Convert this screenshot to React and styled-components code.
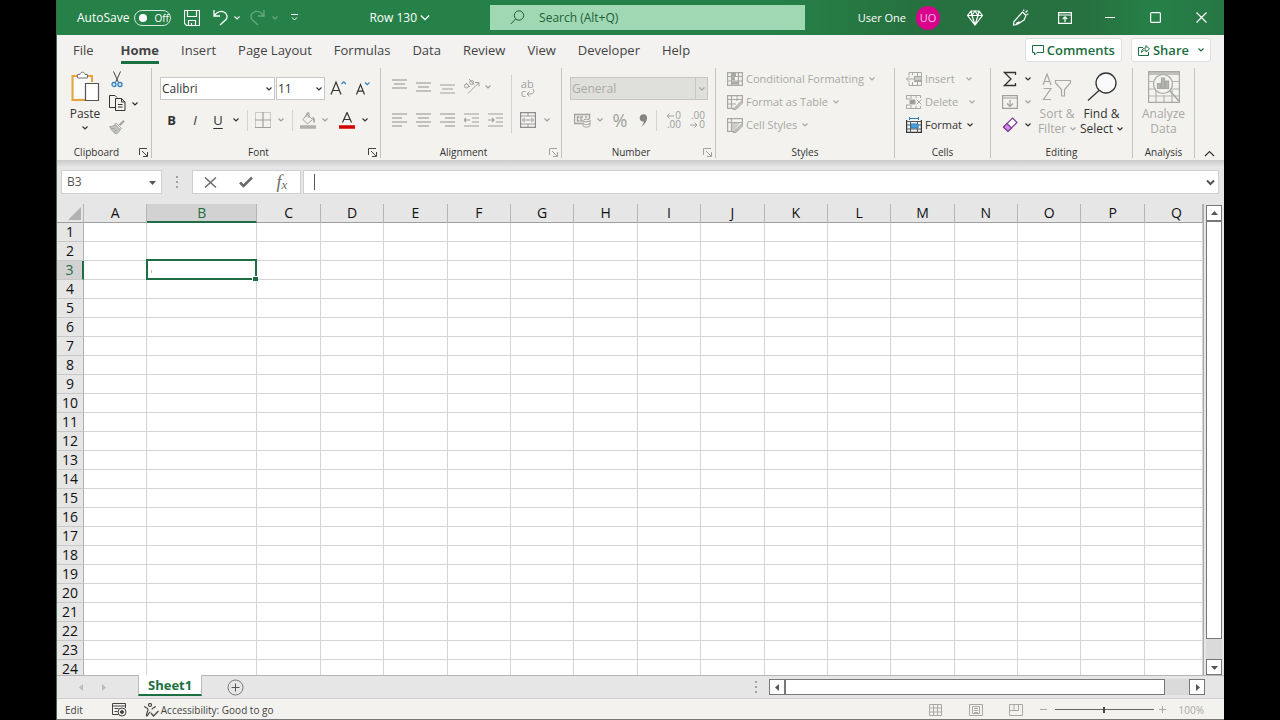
import React, { useState } from 'react'
import styled, { createGlobalStyle, css } from 'styled-components'

const GlobalStyle = createGlobalStyle`
  * {
    box-sizing: border-box;
  }
  body {
    margin: 0;
    background: #000;
    font-family: 'Open Sans', 'Noto Sans', sans-serif;
    font-size: 12px;
    line-height: 16px;
    color: #333;
  }
  button, input, select {
    font: inherit;
    color: inherit;
    margin: 0;
  }
`

const Window = styled.div`
  display: flex;
  flex-direction: column;
  height: 100vh;
  margin: 0 56px;
  border-left: 1px solid #3f6b52;
  border-bottom: 1px solid #777;
  background: #e6e6e6;
  overflow: hidden;
`

const PlainButton = styled.button`
  display: inline-flex;
  align-items: center;
  justify-content: center;
  flex: none;
  padding: 0;
  border: 0;
  background: none;
  white-space: nowrap;
`

const Svg = styled.svg`
  display: block;
  flex: none;
  fill: none;
  stroke: currentColor;
`

const Icon = ({ w = 16, h = w, sw = 1, children }) => (
  <Svg width={w} height={h} viewBox={`0 0 ${w} ${h}`} strokeWidth={sw} aria-hidden="true">
    {children}
  </Svg>
)

const Chevron = ({ size = 6 }) => (
  <Svg width={size} height={size} viewBox="0 0 6 6" strokeWidth={size > 8 ? 0.8 : 1.2} aria-hidden="true">
    <path d="M.5 1.500 3 4l2.500-2.500" />
  </Svg>
)

/* ---------- title bar ---------- */

const TitleBar = styled.header`
  display: flex;
  align-items: center;
  flex: none;
  height: 35px;
  padding-left: 20px;
  color: #fff;
  background: linear-gradient(90deg, #258147 0 62%, #27703f 74% 88%, #258147 94%, #277644);
`

const AutoSave = styled.label`
  display: flex;
  align-items: center;
  gap: 5px;
`

const Toggle = styled.button`
  display: flex;
  align-items: center;
  gap: 7px;
  width: 37px;
  height: 16px;
  padding: 0 4px;
  border: 1px solid #d5eadc;
  border-radius: 8px;
  background: none;
  font-size: 10px;
  line-height: 14px;

  &::before {
    content: '';
    width: 8px;
    height: 8px;
    flex: none;
    border-radius: 50%;
    background: #fff;
  }
`

const TitleButton = styled(PlainButton)`
  width: ${p => p.$w}px;
  height: 35px;
  opacity: ${p => (p.disabled ? 0.3 : 1)};
`

const FileName = styled(PlainButton)`
  gap: 3px;
  height: 34px;
  margin-left: 63px;
`

const SearchBox = styled.label`
  display: flex;
  align-items: center;
  flex: 0 1 315px;
  gap: 14px;
  height: 25px;
  margin-left: 60px;
  padding-left: 20px;
  background: #a0d8b3;
  color: #1e6038;

  input {
    flex: 1;
    min-width: 0;
    padding: 0;
    border: 0;
    outline: 0;
    background: none;
  }
  input::placeholder {
    color: #1e6038;
    opacity: 1;
  }
`

const Account = styled(PlainButton)`
  gap: 10px;
  margin-left: auto;
  padding-right: 13px;
  font-size: 11px;
`

const Avatar = styled.span`
  width: 24px;
  height: 24px;
  border-radius: 50%;
  background: #d8008c;
  line-height: 24px;
  text-align: center;
  color: #f7c4e4;
`

/* ---------- tabs ---------- */

const TabBar = styled.nav`
  display: flex;
  align-items: center;
  flex: none;
  height: 31px;
  padding: 0 13px 0 16px;
  background: #f3f2f1;
`

const Tab = styled.a`
  display: flex;
  align-items: center;
  height: 26px;
  margin-right: 22px;
  border-top: 2px solid transparent;
  border-bottom: 3px solid ${p => (p.$active ? '#1b7041' : 'transparent')};
  font-size: 13px;
  font-weight: ${p => (p.$active ? 700 : 400)};
  color: #444;
  text-decoration: none;
  white-space: nowrap;

  &:first-child {
    margin-right: 27px;
  }
`

const ActionButton = styled(PlainButton)`
  gap: 3px;
  height: 24px;
  padding: 0 6px;
  border: 1px solid #e1dfdd;
  border-radius: 3px;
  background: #fff;
  color: #1b6e40;
  font-size: 13px;
  font-weight: 600;

  > span {
    margin-left: 6px;
  }
`

const Actions = styled.div`
  display: flex;
  gap: 9px;
  margin: -1px 0 0 auto;
`

/* ---------- ribbon ---------- */

const Ribbon = styled.section`
  display: flex;
  flex: none;
  height: 94px;
  padding-top: 2px;
  background: #f3f2ee;
`

const Group = styled.div`
  display: flex;
  flex-direction: column;
  flex: 0 1 ${p => p.$w}px;
  height: 90px;
  border-right: 1px solid #c3c3c0;
`

const GroupBody = styled.div`
  display: flex;
  flex: 1;
  align-items: flex-start;
  justify-content: ${p => p.$justify || 'flex-start'};
  padding-left: ${p => p.$pad || 0}px;
`

const GroupFooter = styled.div`
  display: flex;
  align-items: center;
  height: 12px;
  font-size: 10px;
  line-height: 12px;

  span {
    flex: 1;
    text-align: center;
  }
`

const Launcher = styled(PlainButton)`
  width: 15px;
  height: 12px;
  color: ${p => (p.disabled ? '#a3a3a3' : '#444')};
`

const Stack = styled.div`
  display: flex;
  flex-direction: column;
  flex: none;
`

const Row = styled.div`
  display: flex;
  align-items: center;
  height: ${p => p.$h || 32}px;
  padding-left: ${p => p.$pad || 0}px;
`

const Tool = styled(PlainButton)`
  width: ${p => p.$w || 24}px;
  height: 22px;
  color: ${p => (p.disabled ? '#a0a09d' : '#333')};
  font-size: ${p => p.$size || 13}px;
  font-weight: ${p => (p.$bold ? 700 : 400)};
  font-style: ${p => (p.$italic ? 'italic' : 'normal')};
  text-decoration: ${p => (p.$underline ? 'underline' : 'none')};
  text-underline-offset: 3px;
`

const Divider = styled.span`
  flex: none;
  width: 1px;
  height: ${p => p.$h || 21}px;
  margin: ${p => p.$top || 0}px ${p => p.$gap || 4}px 0;
  background: #d2d2cf;
`

const BigTool = styled(PlainButton)`
  flex-direction: column;
  justify-content: flex-start;
  width: ${p => p.$w}px;
  line-height: 15px;
  color: ${p => (p.disabled ? '#a8a8a5' : '#333')};
`

const BigIcon = styled.span`
  display: flex;
  align-items: center;
  height: 38px;
`

const WithChevron = styled.span`
  display: flex;
  align-items: center;
  gap: 4px;
`

const RowTool = styled(PlainButton)`
  gap: 3px;
  height: 22px;
  font-size: 11px;
  color: ${p => (p.disabled ? '#a8a8a5' : '#333')};

  svg + span {
    margin-right: ${p => p.$gap || 2}px;
  }
`

const Combo = styled.div`
  position: relative;
  width: ${p => p.$w}px;
  height: 23px;
  margin-right: 1px;
  color: ${p => (p.$off ? '#aaaaa6' : '#333')};

  select {
    appearance: none;
    width: 100%;
    height: 100%;
    padding: 0 16px 0 1px;
    border: 1px solid ${p => (p.$off ? '#c6c6c3' : '#c8c8c6')};
    border-radius: 0;
    background: ${p => (p.$off ? '#dfdfdb' : '#fff')};
    color: inherit;
    opacity: 1;
  }
  > svg {
    position: absolute;
    top: 9px;
    right: 3px;
    pointer-events: none;
  }
  ${p => p.$off && css`
    &::after {
      content: '';
      position: absolute;
      top: 0;
      right: 12px;
      bottom: 0;
      border-left: 1px solid #c6c6c3;
    }
  `}
`

const Collapse = styled(PlainButton)`
  align-self: flex-end;
  width: 29px;
  height: 14px;
`

/* ---------- formula bar ---------- */

const FormulaBar = styled.div`
  display: flex;
  align-items: flex-start;
  flex: none;
  height: 44px;
  padding: 10px 5px 0 4px;
  background: linear-gradient(#cbcbcb, #e6e6e6 7px);
`

const FieldBox = styled.div`
  display: flex;
  align-items: center;
  flex: ${p => (p.$grow ? '1' : 'none')};
  width: ${p => (p.$w ? p.$w + 'px' : 'auto')};
  height: 24px;
  padding: 0 5px;
  border: 1px solid #cfcfcf;
  background: #fff;
  color: #555;

  input {
    flex: 1;
    min-width: 0;
    padding: 0;
    border: 0;
    outline: 0;
  }
`

const FormulaField = styled(FieldBox)`
  margin-left: 2px;
  padding-right: 3px;
`

const FormulaTool = styled(Tool)`
  color: #6a6a6a;
`

const FxTool = styled(FormulaTool)`
  font-family: 'Liberation Serif', serif;
  font-size: 18px;
  font-style: italic;

  small {
    align-self: flex-end;
    font-size: 13px;
  }
`

const Caret = styled.span`
  width: 1px;
  height: 16px;
  margin: 0 4px 0 5px;
  background: #555;
`

const Dots = styled.span`
  display: flex;
  align-items: center;
  justify-content: center;
  width: ${p => p.$w}px;
  height: 24px;
  color: #a0a0a0;
`

/* ---------- grid ---------- */

const SheetArea = styled.main`
  display: flex;
  flex: 1;
  min-height: 0;
`

const GridClip = styled.div`
  flex: 1;
  min-width: 0;
  overflow: hidden;
  border-right: 1px solid #ababab;
`

const Grid = styled.table`
  width: 100%;
  table-layout: fixed;
  border-collapse: separate;
  border-spacing: 0;
  background: #fff;

  th, td {
    height: 19px;
    padding: 0;
    font-size: 14px;
    font-weight: 400;
    line-height: 18px;
    color: #111;
  }
  td {
    border-right: 1px solid #d4d4d4;
    border-bottom: 1px solid #d4d4d4;
  }
  thead th:last-child {
    padding-left: 6px;
  }
`

const RowHeadCol = styled.col`
  width: 27px;
`
const WideCol = styled.col`
  width: 110px;
`
const LastCol = styled.col`
  width: 58px;
`

const ColHead = styled.th`
  border-right: 1px solid #b5b5b5;
  border-bottom: 1px solid #9f9f9f;
  background: #e6e6e6;

  ${p => p.$active && css`
    && {
      color: #1f6e43;
      line-height: 17px;
    }
    border-bottom: 2px solid #1f6e43;
    background: #d2d2d2;
  `}
`

const RowHead = styled.th`
  border-right: 1px solid #b0b0b0;
  border-bottom: 1px solid #c8c8c8;
  background: #e6e6e6;

  ${p => p.$active && css`
    && {
      color: #1f6e43;
    }
    border-right: 2px solid #1f6e43;
    background: #d2d2d2;
  `}
`

const Corner = styled.th`
  border-right: 1px solid #b5b5b5;
  border-bottom: 1px solid #9f9f9f;
  background: #e6e6e6;

  svg {
    margin-left: auto;
    margin-right: 2px;
  }
`

const ActiveCell = styled.td`
  position: relative;

  &::before {
    content: '';
    position: absolute;
    inset: -2px -1px -1px -1px;
    border: 2px solid #1f6e43;
  }
  &::after {
    content: '';
    position: absolute;
    right: -2px;
    bottom: -2px;
    width: 5px;
    height: 4px;
    border: 1px solid #fff;
    border-width: 1px 0 0 1px;
    background: #1f6e43;
  }
`

const CellCaret = styled.span`
  display: block;
  width: 1px;
  height: 3px;
  margin: 3px 0 0 4px;
  background: #b5c4bb;
`

const VScroll = styled.div`
  display: flex;
  flex-direction: column;
  flex: none;
  width: 16px;
  margin: 1px 2px 0 2px;
  background: #dadada;
`

const HScroll = styled.div`
  display: flex;
  flex: 0 1 436px;
  height: 16px;
  background: #dadada;
`

const ScrollButton = styled(PlainButton)`
  width: 16px;
  height: 16px;
  border: 1px solid #777;
  background: #fff;
  color: #555;
`

const Thumb = styled.div`
  flex: 1;
  border: 1px solid #777;
  background: #fff;
`

const ThumbGap = styled.div`
  flex: none;
  width: ${p => p.$w || 0}px;
  height: ${p => p.$h || 0}px;
`

/* ---------- bottom bars ---------- */

const SheetBar = styled.div`
  display: flex;
  align-items: center;
  flex: none;
  height: 24px;
  padding-right: 19px;
  border-top: 1px solid #b5b5b5;
  border-bottom: 1px solid #cfcfcf;
`

const NavButton = styled(PlainButton)`
  width: 22px;
  height: 22px;
  color: #bdbdbd;
`

const SheetTab = styled.button`
  align-self: flex-start;
  height: 21px;
  margin: -1px 25px 0 24px;
  padding: 0 9px;
  border: 1px solid #bbb;
  border-width: 0 1px;
  border-bottom: 2px solid #1b7041;
  background: #fff;
  color: #1b7041;
  font-size: 13px;
  font-weight: 700;
  line-height: 18px;
`

const ScrollArea = styled.div`
  display: flex;
  align-items: center;
  justify-content: flex-end;
  flex: 1;
`

const StatusBar = styled.footer`
  display: flex;
  align-items: center;
  flex: none;
  height: 20px;
  padding: 1px 20px 0 8px;
  background: #f3f2ee;
  font-size: 10px;
  color: #444;
`

const StatusButton = styled(PlainButton)`
  width: ${p => (p.$w ? p.$w + 'px' : 'auto')};
  height: 19px;
  margin-left: ${p => p.$ml || 0}px;
  gap: 2px;
`

const ViewTools = styled.div`
  display: flex;
  align-items: center;
  margin-left: auto;
  color: #a9a9a6;
`

const Zoom = styled.input`
  appearance: none;
  width: 99px;
  height: 8px;
  margin: 0 4px;
  background: linear-gradient(#666, #666) center / 100% 1px no-repeat;

  &::-webkit-slider-thumb {
    appearance: none;
    width: 2px;
    height: 6px;
    background: #444;
  }
`

const Percent = styled.span`
  margin-left: 11px;
`

/* ---------- drawings ---------- */

const MagnifierIcon = () => (
  <Icon w={15}>
    <circle cx="9" cy="5.500" r="4.700" />
    <path d="M5.600 9 .8 14" />
  </Icon>
)

const PasteIcon = () => (
  <Icon w={30} h={32}>
    <path d="M7 5H2.500v24H15" stroke="#e8a33d" strokeWidth="2" />
    <path d="M18 5h4v6" stroke="#e8a33d" strokeWidth="2" />
    <path d="M4 6h16v5h-5v16H4z" fill="#fbfbfa" stroke="none" />
    <path d="M7.500 7V3.500H10c0-3 5-3 5 0h2.500V7z" fill="#fff" stroke="#777" />
    <path d="M15.500 12.500h13v17h-13z" fill="#fff" stroke="#555" strokeWidth="1.200" />
  </Icon>
)

const CutIcon = () => (
  <Icon w={12} h={17}>
    <path d="m2.500.5 5 11M9.500.5l-5 11" stroke="#444" />
    <circle cx="3" cy="13.500" r="2" stroke="#2c7fc1" strokeWidth="1.300" />
    <circle cx="9" cy="13.500" r="2" stroke="#2c7fc1" strokeWidth="1.300" />
  </Icon>
)

const CopyIcon = () => (
  <Icon w={17}>
    <path d="M6 12.500H.5V.5H6l2 2" />
    <path d="M6.500 3.500h6l3.500 3.500v8.500H6.500zM12.500 3.500V7H16M9 9.500h4.500M9 12h4.500" />
  </Icon>
)

const BrushIcon = () => (
  <Icon w={16} h={15}>
    <path d="m15 .8-4.500 4.500" strokeWidth="2" />
    <path d="m7 3 5.500 5.500-1.500 1L6 4.500z" fill="#fff" />
    <path d="M6 4.500C4.500 6 3 6.500.8 6.500c1 3 3.500 6 6.500 7.500 2-1.500 3.500-3 3.700-4.500z" fill="#c4c4c1" />
    <path d="m3 9 3-1M5 11.500l3-2" />
  </Icon>
)

const FontSizeIcon = ({ up }) => (
  <Icon w={18} h={17} sw={1.200}>
    {up
      ? <><path d="M1 14.500 6 2l5 12.500M2.800 10.500h6.500" /><path d="m11.500 4 2.200-2.200L16 4" stroke="#2c7fc1" /></>
      : <><path d="M1.500 14.500 5.500 4.500l4 10M3 11.200h5" /><path d="m10 2.500 2.200 2.200L14.500 2.500" stroke="#2c7fc1" /></>}
  </Icon>
)

const BordersIcon = () => (
  <Icon w={16}>
    <path d="M.5.5h15v15H.5z" strokeDasharray="1 1" />
    <path d="M8 0v16M0 8h16" strokeWidth="1.200" />
    <path d="M0 15.500h16" />
  </Icon>
)

const FillIcon = () => (
  <Icon w={16} h={17}>
    <path d="m7 2 5.500 5.500-5 4.500L3 7.500zM7 5V.8h2V6" />
    <path d="M12.500 5.500C14.500 6 14 8 14 10.500" strokeWidth="1.600" />
    <path d="M0 15h16" strokeWidth="3.500" stroke="#b0b0ad" />
  </Icon>
)

const FontColorIcon = () => (
  <Icon w={16} h={17}>
    <path d="M3.500 10.500 8 .5l4.500 10M5 7.500h6" strokeWidth="1.200" />
    <path d="M0 15h16" strokeWidth="3.500" stroke="#d40000" />
  </Icon>
)

const LinesIcon = ({ lines, h = 14 }) => (
  <Icon w={15} h={h} sw={1.200}>
    {lines.map(([x, len], i) => <path key={i} d={`M${x} ${i * 4 + 1}h${len}`} />)}
  </Icon>
)

const IndentIcon = ({ right }) => (
  <Icon w={15} h={14} sw={1.200}>
    <path d="M0 1h15M8 5h7M8 9h7M0 13h15" />
    <path d={right ? 'M0 7h6M4 5l2 2-2 2' : 'M6 7H0M2 5 0 7l2 2'} />
  </Icon>
)

const OrientationIcon = () => (
  <Icon w={17}>
    <path d="M5 15.500 15.500 5M12 4.500h4v4" />
    <circle cx="3.500" cy="8" r="2" />
    <path d="m3 5 4 4M6 1l5 5.500" />
    <circle cx="8.700" cy="4.500" r="2" />
  </Icon>
)

const WrapGlyph = styled.span`
  display: flex;
  flex-direction: column;
  font-size: 11px;
  line-height: 9px;
  text-align: left;

  span {
    display: flex;
    align-items: center;
  }
`

const MergeIcon = () => (
  <Icon w={16}>
    <path d="M0 4h16M0 12h16M8 0v4M8 12v4M2.500 8h11M5 5.800 2.500 8 5 10.200M11 5.800 13.500 8 11 10.200" />
    <path d="M.6.600h14.800v14.800H.6z" strokeWidth="1.200" stroke="#8d8d92" />
  </Icon>
)

const MoneyIcon = () => (
  <Icon w={17} h={15}>
    <path d="M8 10.500H.5v-9h15V6M5.500 4h-2v4h2M9 4H7v4h1M11 4h2" strokeWidth="1.400" />
    <ellipse cx="12.500" cy="7.500" rx="3.500" ry="1.300" fill="#ededea" />
    <path d="M9 7.500v5c0 2 7 2 7 0v-5M9 10c0 2 7 2 7 0" />
  </Icon>
)

const DecimalGlyph = styled.span`
  display: flex;
  flex-direction: column;
  align-items: flex-end;
  width: 16px;
  font-size: 10px;
  line-height: 9px;

  span {
    display: flex;
    align-items: center;
    gap: 1px;
  }
`

const Arrow = ({ left }) => (
  <Icon w={8} h={6}>
    <path d={left ? 'M8 3H1M3.500.5 1 3l2.500 2.500' : 'M0 3h7M4.500.5 7 3 4.500 5.500'} />
  </Icon>
)

const CondIcon = () => (
  <Icon w={16}>
    <path d="M.6 1.600h14.800v12.800H.6zM0 5.500h16M0 10h16M4.500 1v14M11.500 1v14" strokeWidth="1.200" />
    <path d="M5 3.500h4M5 7.700h3M5 12h6" strokeWidth="3" />
  </Icon>
)

const TableIcon = ({ shaded }) => (
  <Icon w={16}>
    <path d="M7 14.400H.6V1.600h14.800V5M0 5.500h16M4.500 1v14" strokeWidth="1.200" />
    {shaded ? <path d="M5 6h8l-6 8H5z" fill="#ccc" stroke="none" /> : <path d="M0 10h9M10 1v6" />}
    <path d="M15.500 6 9 12.500l1.500 1.500 5-5zM9 12.500 6 15.500h3l1.500-1.500" fill="#c4c4c1" />
  </Icon>
)

const InsertCellsIcon = () => (
  <Icon w={16}>
    <path d="M3 4.500v-3h12.500v13H3v-3M8 5.500h8M8 10.500h8M6.500 1v3M11.500 1v14M6.500 11v4" />
    <path d="M8.500 5.500h7v4h-7z" fill="#ccc" />
    <path d="M8 8H.5M3.500 5 .5 8l3 3" />
  </Icon>
)

const DeleteCellsIcon = () => (
  <Icon w={16}>
    <path d="M.5 5V1.500h14V4M.5 11v3.500h14V12M5 1.500V5M10 1.500V4M5 11v3.500M10 12v2.500M0 5h4M0 11h4" />
    <path d="M4 6h5v4H4z" fill="#999" />
    <path d="m10.500 5.500 5 5M15.500 5.500l-5 5" />
  </Icon>
)

const FormatCellsIcon = () => (
  <Icon w={16}>
    <path d="M3.500 0v3M12.500 0v3M3 1.500h10" stroke="#2c7fc1" />
    <path d="M.6 3v12.400h14.800V3" stroke="#333" strokeWidth="1.200" />
    <path d="M.5 4.500h15M.5 8h15M.5 12h15M4.500 4v12M11.500 4v12" stroke="#555" />
    <path d="M5 7h7v4H5z" fill="#4aa0de" stroke="#2c7fc1" />
  </Icon>
)

const SigmaIcon = () => (
  <Icon w={14} h={16} sw={1.300}>
    <path d="M12.500 4V1.500h-11L8 8l-6.500 6.500h11V12" />
  </Icon>
)

const FillDownIcon = () => (
  <Icon w={16} h={14}>
    <path d="M.6.600h14.800v12.800H.6zM0 3h16M8 5v6.500M5 8.500l3 3 3-3" strokeWidth="1.200" />
  </Icon>
)

const EraserIcon = () => (
  <Icon w={16}>
    <path d="M10.500 1 15 5.500 6 14.500 1.500 10z" fill="#fff" stroke="#7d3f92" strokeWidth="1.200" />
    <path d="m5 6.500 4.500 4.500L6 14.500 1.500 10z" fill="#d68be6" stroke="#7d3f92" strokeWidth="1.200" />
  </Icon>
)

const SortFilterIcon = () => (
  <Icon w={30} h={28} sw={1.200}>
    <path d="M1 12 5 1l4 11M2.500 8.500h5M1.500 15.500H9l-7.500 11H9" />
    <path d="M13.500 7.500h15V10l-6 6.500V23l-3 0v-6.500l-6-6.500z" />
  </Icon>
)

const FindIcon = () => (
  <Icon w={30} h={30} sw={1.300}>
    <circle cx="19" cy="11" r="10" fill="#fafafa" />
    <path d="m12 18.500-11 10" />
  </Icon>
)

const AnalyzeIcon = () => (
  <Icon w={32} h={32} sw={1.200}>
    <path d="M1 2.500h30" strokeWidth="3" stroke="#c0c0bd" />
    <path d="M0 10.500h31M0 18h31M0 25h31M8 19v12M16 24v7M24 19v12" stroke="#b4b4b1" />
    <path d="M.6.600h30.800v30.800H.6z" />
    <circle cx="15" cy="13" r="9.500" fill="#f3f2ee" />
    <path d="M9.500 12.500h3v5h-3zM13.500 7h3v10.500h-3zM17.500 10h3v7.500h-3z" fill="#b4b4b1" />
    <path d="m22 20 9 10" strokeWidth="1.600" />
  </Icon>
)

const LaunchIcon = () => (
  <Icon w={9}>
    <path d="M.5 7V.5H8M3 3l5 5M8.500 4v4.500H4" />
  </Icon>
)

const Triangle = ({ dir = 'down' }) => (
  <Icon w={7}>
    <path
      d={{ down: 'M0 2h7L3.500 6z', up: 'M0 5h7L3.500 1z', left: 'M5 0v7L1 3.500z', right: 'M2 0v7l4-3.500z' }[dir]}
      fill="currentColor"
      stroke="none"
    />
  </Icon>
)

const DotsIcon = () => (
  <Icon w={2} h={12} sw={2}>
    <path d="M1 0v2M1 5v2M1 10v2" />
  </Icon>
)

/* ---------- sections ---------- */

const RibbonGroup = ({ label, width, pad, justify, launcher, launcherOff, children }) => (
  <Group $w={width}>
    <GroupBody $pad={pad} $justify={justify}>{children}</GroupBody>
    <GroupFooter>
      <span>{label}</span>
      {launcher && (
        <Launcher disabled={launcherOff} aria-label={`${label} settings`}><LaunchIcon /></Launcher>
      )}
    </GroupFooter>
  </Group>
)

const More = ({ w = 14, disabled }) => (
  <Tool $w={w} disabled={disabled} aria-label="More options"><Chevron /></Tool>
)

const Title = () => (
  <TitleBar>
    <AutoSave>
      AutoSave
      <Toggle role="switch" aria-checked="false">Off</Toggle>
    </AutoSave>
    <TitleButton $w={42} aria-label="Save">
      <Icon w={16}><path d="M.5.5h15v15H2.500l-2-2zM3.500.5v6h9v-6M4.500 15.500v-5h7v5M7.500 13v2.500" strokeWidth="1.200" /></Icon>
    </TitleButton>
    <TitleButton $w={15} aria-label="Undo">
      <Icon w={15} h={17} sw={1.300}><path d="M1 1v6h6M1.300 6.700C4 3 8 1.500 11 3s4 5 2 7.500L7 16" /></Icon>
    </TitleButton>
    <TitleButton $w={18} aria-label="Undo history"><Chevron /></TitleButton>
    <TitleButton $w={22} disabled aria-label="Redo">
      <Icon w={15} h={17} sw={1.300}><path d="M14 1v6H8M13.700 6.700C11 3 7 1.500 4 3s-4 5-2 7.500L8 16" /></Icon>
    </TitleButton>
    <TitleButton $w={14} disabled aria-label="Redo history"><Chevron /></TitleButton>
    <TitleButton $w={24} aria-label="Customize toolbar">
      <Icon w={7}><path d="M0 .5h7M1 3.500 3.500 6 6 3.500" /></Icon>
    </TitleButton>
    <FileName>Row 130 <Chevron size={10} /></FileName>
    <SearchBox>
      <MagnifierIcon />
      <input type="search" placeholder="Search (Alt+Q)" aria-label="Search" />
    </SearchBox>
    <Account>User One <Avatar>UO</Avatar></Account>
    <TitleButton $w={44} aria-label="Premium">
      <Icon w={16}><path d="M4 1h8l3.500 4.500L8 15 .5 5.500zM.5 5.500h15M4 1l1 4.500L8 15l3-9.500L12 1M5 5.500 8 1l3 4.500" strokeWidth="1.200" /></Icon>
    </TitleButton>
    <TitleButton $w={46} aria-label="Draw">
      <Icon w={17} sw={1.200}><path d="M10.500 3 14 6.500 12 11l-7 4.500-3.500.5.500-3.500zM4 14.500l3-1.500 1 1.500M11.500 2 12 .5M13.500 3.500l2-2M14.500 5.500l2-.5" /></Icon>
    </TitleButton>
    <TitleButton $w={44} aria-label="Ribbon display options">
      <Icon w={14} h={12} sw={1.200}><path d="M.6.600h12.800v10.800H.6zM0 3h14M7 10V5M4.800 7 7 4.800 9.200 7" /></Icon>
    </TitleButton>
    <TitleButton $w={46} aria-label="Minimize"><Icon w={10}><path d="M0 4.500h10" /></Icon></TitleButton>
    <TitleButton $w={45} aria-label="Maximize">
      <Icon w={11}><rect x=".6" y=".6" width="9.800" height="9.800" rx="1" strokeWidth="1.200" /></Icon>
    </TitleButton>
    <TitleButton $w={46} aria-label="Close"><Icon w={11}><path d="m.5.5 10 10M10.500.5l-10 10" strokeWidth="1.200" /></Icon></TitleButton>
  </TitleBar>
)

const tabs = ['File', 'Home', 'Insert', 'Page Layout', 'Formulas', 'Data', 'Review', 'View', 'Developer', 'Help']

const Tabs = () => (
  <TabBar>
    {tabs.map(name => <Tab key={name} href="#" $active={name === 'Home'}>{name}</Tab>)}
    <Actions>
      <ActionButton>
        <Icon w={12}><path d="M.5 1.500h11v7H5L2.500 11V8.500h-2z" /></Icon>
        Comments
      </ActionButton>
      <ActionButton>
        <Icon w={12}><path d="M5 3.500H.5v8h10V8M3.500 8.500c0-3 2-4.500 4.500-4.500V1.500L11.500 5 8 8V6C6 6 4.500 7 3.500 8.500z" /></Icon>
        Share
        <span><Chevron /></span>
      </ActionButton>
    </Actions>
  </TabBar>
)

const RibbonBar = () => (
  <Ribbon>
    <RibbonGroup label="Clipboard" width={95} pad={8} launcher>
      <BigTool $w={40}>
        <BigIcon><PasteIcon /></BigIcon>
        Paste
        <Row $h={14}><Chevron /></Row>
      </BigTool>
      <Stack>
        <Row $h={23}><Tool $w={24} aria-label="Cut"><CutIcon /></Tool></Row>
        <Row $h={25}><Tool $w={24} aria-label="Copy"><CopyIcon /></Tool><More w={12} /></Row>
        <Row $h={22}><Tool $w={24} disabled aria-label="Format painter"><BrushIcon /></Tool></Row>
      </Stack>
    </RibbonGroup>

    <RibbonGroup label="Font" width={229} pad={8} launcher>
      <Stack>
        <Row $h={41}>
          <Combo $w={115}>
            <select aria-label="Font"><option>Calibri</option></select>
            <Chevron />
          </Combo>
          <Combo $w={49}>
            <select aria-label="Font size"><option>11</option></select>
            <Chevron />
          </Combo>
          <Tool $w={26} aria-label="Increase font size"><FontSizeIcon up /></Tool>
          <Tool $w={24} aria-label="Decrease font size"><FontSizeIcon /></Tool>
        </Row>
        <Row $h={22}>
          <Tool $w={23} $bold>B</Tool>
          <Tool $w={24} $italic>I</Tool>
          <Tool $w={22} $underline>U</Tool>
          <More />
          <Divider />
          <Tool $w={22} disabled aria-label="Borders"><BordersIcon /></Tool>
          <More disabled />
          <Divider />
          <Tool $w={22} disabled aria-label="Fill color"><FillIcon /></Tool>
          <More w={12} disabled />
          <Tool $w={32} aria-label="Font color"><FontColorIcon /></Tool>
          <More w={4} />
        </Row>
      </Stack>
    </RibbonGroup>

    <RibbonGroup label="Alignment" width={181} pad={6} launcher launcherOff>
      <Stack>
        <Row $h={37}>
          <Tool disabled aria-label="Top align"><LinesIcon h={15} lines={[[0, 15], [2, 11], [0, 15]]} /></Tool>
          <Tool disabled aria-label="Middle align"><LinesIcon h={10} lines={[[0, 15], [2, 11], [0, 15]]} /></Tool>
          <Tool disabled aria-label="Bottom align">
            <Icon w={15} h={15} sw={1.200}><path d="M0 6h15M2 10h11M0 14h15" /></Icon>
          </Tool>
          <Tool disabled aria-label="Orientation"><OrientationIcon /></Tool>
          <More w={10} disabled />
        </Row>
        <Row $h={29}>
          <Tool disabled aria-label="Align left"><LinesIcon lines={[[0, 15], [0, 10], [0, 15], [0, 10]]} /></Tool>
          <Tool disabled aria-label="Center"><LinesIcon lines={[[0, 15], [2, 11], [0, 15], [2, 11]]} /></Tool>
          <Tool disabled aria-label="Align right"><LinesIcon lines={[[0, 15], [5, 10], [0, 15], [5, 10]]} /></Tool>
          <Tool disabled aria-label="Decrease indent"><IndentIcon /></Tool>
          <Tool disabled aria-label="Increase indent"><IndentIcon right /></Tool>
        </Row>
      </Stack>
      <Divider $h={58} $top={7} $gap={4} />
      <Stack>
        <Row $h={40}>
          <Tool disabled aria-label="Wrap text">
            <WrapGlyph>
              <span>ab</span>
              <span>c<Icon w={9} h={8}><path d="M7 0c2 3 0 5-3 5H1M3.500 2.500 1 5l2.500 2.500" /></Icon></span>
            </WrapGlyph>
          </Tool>
        </Row>
        <Row $h={23}>
          <Tool disabled aria-label="Merge and center"><MergeIcon /></Tool>
          <More disabled />
        </Row>
      </Stack>
    </RibbonGroup>

    <RibbonGroup label="Number" width={154} pad={8} launcher launcherOff>
      <Stack>
        <Row $h={41}>
          <Combo $w={138} $off>
            <select disabled aria-label="Number format"><option>General</option></select>
            <Chevron />
          </Combo>
        </Row>
        <Row $h={22}>
          <Tool disabled aria-label="Accounting format"><MoneyIcon /></Tool>
          <More w={12} disabled />
          <Tool $w={28} $size={18} disabled>%</Tool>
          <Tool $w={18} disabled aria-label="Comma style">
            <Icon w={9} h={13}><path d="M4 .3C9.500-.5 10 8 2 12.800 4.500 9.500 5 8.500 4.500 7.500-.5 8-.5.800 4 .300z" fill="#858582" stroke="none" /></Icon>
          </Tool>
          <Divider />
          <Tool disabled aria-label="Increase decimal">
            <DecimalGlyph><span><Arrow left />0</span><span>.00</span></DecimalGlyph>
          </Tool>
          <Tool disabled aria-label="Decrease decimal">
            <DecimalGlyph><span>.00</span><span><Arrow />0</span></DecimalGlyph>
          </Tool>
        </Row>
      </Stack>
    </RibbonGroup>

    <RibbonGroup label="Styles" width={179} pad={11}>
      <Stack>
        <Row $h={22}><RowTool disabled><CondIcon /><span>Conditional Formatting</span><Chevron /></RowTool></Row>
        <Row $h={23}><RowTool disabled><TableIcon /><span>Format as Table</span><Chevron /></RowTool></Row>
        <Row $h={23}><RowTool disabled><TableIcon shaded /><span>Cell Styles</span><Chevron /></RowTool></Row>
      </Stack>
    </RibbonGroup>

    <RibbonGroup label="Cells" width={96} pad={11}>
      <Stack>
        <Row $h={22}><RowTool disabled $gap={8}><InsertCellsIcon /><span>Insert</span><Chevron /></RowTool></Row>
        <Row $h={23}><RowTool disabled $gap={8}><DeleteCellsIcon /><span>Delete</span><Chevron /></RowTool></Row>
        <Row $h={23}><RowTool><FormatCellsIcon /><span>Format</span><Chevron /></RowTool></Row>
      </Stack>
    </RibbonGroup>

    <RibbonGroup label="Editing" width={142} pad={7}>
      <Stack>
        <Row $h={22}><Tool aria-label="AutoSum"><SigmaIcon /></Tool><More w={12} /></Row>
        <Row $h={23}><Tool disabled aria-label="Fill"><FillDownIcon /></Tool><More w={12} disabled /></Row>
        <Row $h={23}><Tool aria-label="Clear"><EraserIcon /></Tool><More w={12} /></Row>
      </Stack>
      <BigTool $w={46} disabled>
        <BigIcon><SortFilterIcon /></BigIcon>
        <span>Sort &amp;</span>
        <WithChevron>Filter <Chevron /></WithChevron>
      </BigTool>
      <BigTool $w={43}>
        <BigIcon><FindIcon /></BigIcon>
        <span>Find &amp;</span>
        <WithChevron>Select <Chevron /></WithChevron>
      </BigTool>
    </RibbonGroup>

    <RibbonGroup label="Analysis" width={62} justify="center">
      <BigTool $w={50} disabled>
        <BigIcon><AnalyzeIcon /></BigIcon>
        <span>Analyze</span>
        <span>Data</span>
      </BigTool>
    </RibbonGroup>

    <Collapse aria-label="Collapse the ribbon">
      <Icon w={11} h={7} sw={1.200}><path d="m1 6 4.500-4.500L10 6" /></Icon>
    </Collapse>
  </Ribbon>
)

const Formula = ({ cell }) => (
  <FormulaBar>
    <FieldBox $w={101}>
      <input defaultValue={cell} aria-label="Name box" />
      <Triangle />
    </FieldBox>
    <Dots $w={30}><DotsIcon /></Dots>
    <FieldBox $w={109}>
      <FormulaTool $w={24} aria-label="Cancel"><Icon w={13} sw={1.500}><path d="m1 1.500 11 10M12 1.500l-11 10" /></Icon></FormulaTool>
      <FormulaTool $w={48} aria-label="Enter"><Icon w={14} h={12} sw={2.500}><path d="m1 6.500 3.500 3.500L13 1.500" /></Icon></FormulaTool>
      <FxTool $w={24} aria-label="Insert function">f<small>x</small></FxTool>
    </FieldBox>
    <FormulaField $grow>
      <Caret />
      <input aria-label="Formula" />
      <Icon w={9} h={7} sw={2}><path d="M1 1.500 4.500 5 8 1.500" /></Icon>
    </FormulaField>
  </FormulaBar>
)

const columns = 'ABCDEFGHIJKLMNOPQ'.split('')
const rows = Array.from({ length: 24 }, (_, i) => i + 1)

const colFor = c => {
  if (c === 'B') return <WideCol key={c} />
  if (c === 'Q') return <LastCol key={c} />
  return <col key={c} />
}

const Sheet = ({ active }) => (
  <SheetArea>
    <GridClip>
      <Grid>
        <colgroup>
          <RowHeadCol />
          {columns.map(colFor)}
        </colgroup>
        <thead>
          <tr>
            <Corner aria-label="Select all">
              <Icon w={13}><path d="M13 0v13H0z" fill="#b2b2b2" stroke="none" /></Icon>
            </Corner>
            {columns.map(c => <ColHead key={c} scope="col" $active={c === active[0]}>{c}</ColHead>)}
          </tr>
        </thead>
        <tbody>
          {rows.map(r => (
            <tr key={r}>
              <RowHead scope="row" $active={String(r) === active.slice(1)}>{r}</RowHead>
              {columns.map(c => (c + r === active ? <ActiveCell key={c}><CellCaret /></ActiveCell> : <td key={c} />))}
            </tr>
          ))}
        </tbody>
      </Grid>
    </GridClip>
    <VScroll>
      <ScrollButton aria-label="Scroll up"><Triangle dir="up" /></ScrollButton>
      <Thumb />
      <ThumbGap $h={20} />
      <ScrollButton aria-label="Scroll down"><Triangle /></ScrollButton>
    </VScroll>
  </SheetArea>
)

const Bottom = () => {
  const [zoom, setZoom] = useState(50)
  return (
    <>
      <SheetBar>
        <Row $h={22} $pad={13}>
          <NavButton aria-label="Previous sheet"><Triangle dir="left" /></NavButton>
          <NavButton aria-label="Next sheet"><Triangle dir="right" /></NavButton>
        </Row>
        <SheetTab>Sheet1</SheetTab>
        <PlainButton aria-label="New sheet">
          <Icon w={17}><circle cx="8.500" cy="8.500" r="7.500" stroke="#777" /><path d="M8.500 4.500v8M4.500 8.500h8" stroke="#555" /></Icon>
        </PlainButton>
        <ScrollArea>
          <Dots $w={27}><DotsIcon /></Dots>
          <HScroll>
            <ScrollButton aria-label="Scroll left"><Triangle dir="left" /></ScrollButton>
            <Thumb />
            <ThumbGap $w={24} />
            <ScrollButton aria-label="Scroll right"><Triangle dir="right" /></ScrollButton>
          </HScroll>
        </ScrollArea>
      </SheetBar>
      <StatusBar>
        <span>Edit</span>
        <StatusButton $ml={29} aria-label="Record macro">
          <Icon w={15} h={14}>
            <path d="M6 11.500H.5V.5h13V5M0 3h14M2.500 5.500h4M2.500 8.500h3" />
            <circle cx="10" cy="9" r="4" fill="#f3f2ee" />
            <circle cx="10" cy="9" r="1.500" fill="#444" />
          </Icon>
        </StatusButton>
        <StatusButton $ml={17}>
          <Icon w={15} h={14} sw={1.200}>
            <circle cx="6" cy="2" r="1.500" />
            <path d="M1 3c-1 2 3 1.500 3 3.500S2 11 2.500 13c2 0 2-4 4-4M11 3c1 2-3 1.500-3 3.500M7 10l2.500 3L14.500 8" />
          </Icon>
          Accessibility: Good to go
        </StatusButton>
        <ViewTools>
          <StatusButton $w={40} aria-label="Normal view">
            <Icon w={14}><path d="M.5 1.500h12v11H.5zM.5 5h12M.5 9h12M4.500 1v12M8.500 1v12" /></Icon>
          </StatusButton>
          <StatusButton $w={40} aria-label="Page layout view">
            <Icon w={14}><path d="M.5 1.500h13v11H.5zM3.500 3.500h7v7h-7zM5 5.500h4M5 7.500h4M5 9.500h4" /></Icon>
          </StatusButton>
          <StatusButton $w={40} aria-label="Page break view">
            <Icon w={14}><path d="M.5 1.500h13v11H.5zM5 1.500v6h-4M9.500 1.500v6H5" /></Icon>
          </StatusButton>
          <StatusButton $w={15} aria-label="Zoom out"><Icon w={9}><path d="M1 4.500h7" /></Icon></StatusButton>
          <Zoom type="range" aria-label="Zoom" value={zoom} onChange={e => setZoom(e.target.value)} />
          <StatusButton $w={10} aria-label="Zoom in"><Icon w={9}><path d="M1 4.500h7M4.500 1v7" /></Icon></StatusButton>
          <Percent>100%</Percent>
        </ViewTools>
      </StatusBar>
    </>
  )
}

const App = () => (
  <>
    <GlobalStyle />
    <Window>
      <Title />
      <Tabs />
      <RibbonBar />
      <Formula cell="B3" />
      <Sheet active="B3" />
      <Bottom />
    </Window>
  </>
)

export default App
